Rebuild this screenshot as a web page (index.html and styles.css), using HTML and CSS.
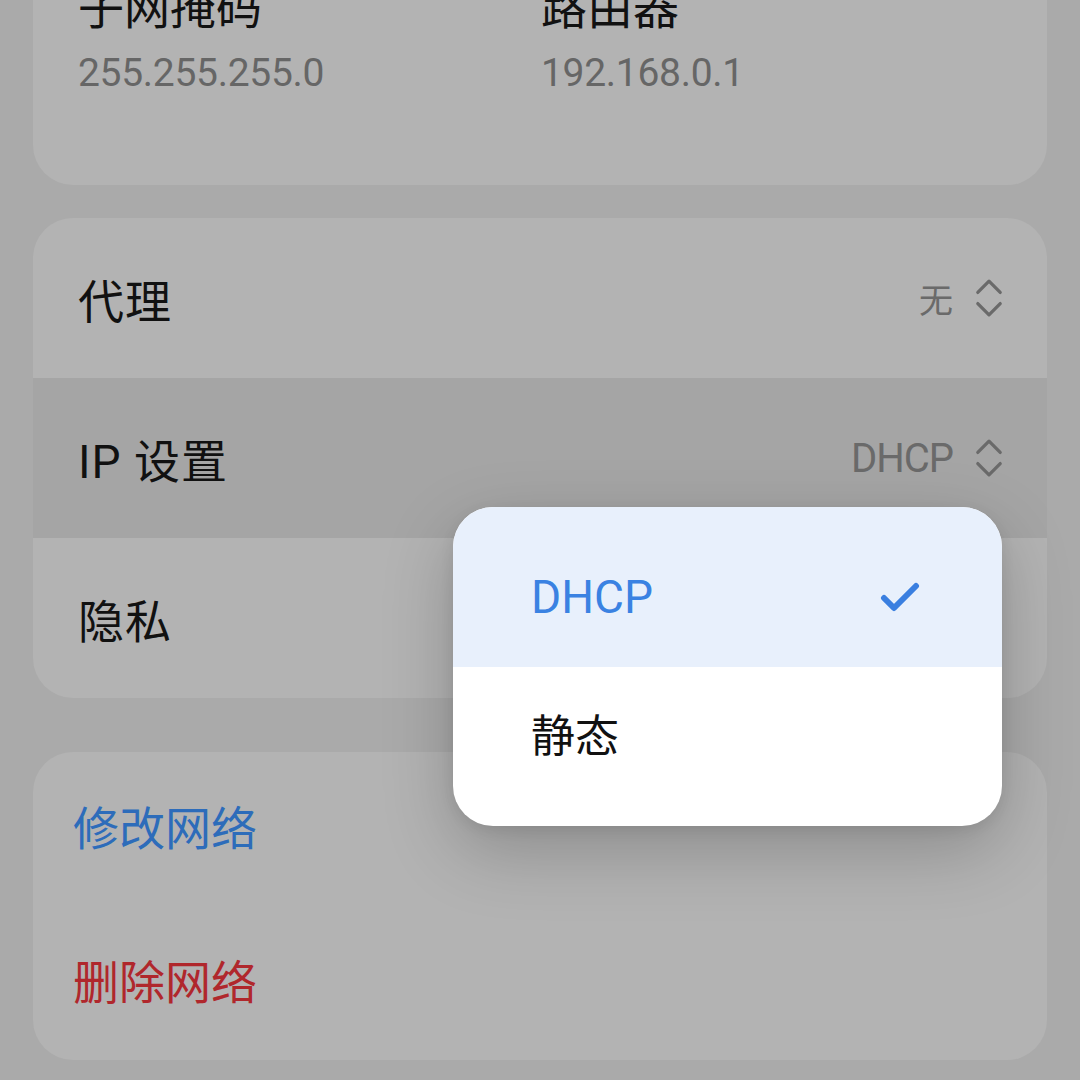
FILE: index.html
```html
<!DOCTYPE html>
<html lang="zh-CN">
<head>
<meta charset="utf-8">
<meta name="viewport" content="width=device-width, initial-scale=1.0">
<title>网络详情</title>
<link rel="stylesheet" href="styles.css">
</head>
<body>
<div class="page">

  <!-- 地址信息 -->
  <div class="card info-card">
    <div class="info-col">
      <div class="info-title">子网掩码</div>
      <div class="info-value">255.255.255.0</div>
    </div>
    <div class="info-col">
      <div class="info-title">路由器</div>
      <div class="info-value">192.168.0.1</div>
    </div>
  </div>

  <!-- 代理 / IP / 隐私 -->
  <div class="card list-card">
    <div class="row">
      <span class="row-label">代理</span>
      <span class="row-value">无
        <svg class="updown" viewBox="0 0 30 44"><path d="M3 16 L15 4 L27 16 M3 28 L15 40 L27 28"/></svg>
      </span>
    </div>
    <div class="row row-active">
      <span class="row-label">IP 设置</span>
      <span class="row-value row-value-latin">DHCP
        <svg class="updown" viewBox="0 0 30 44"><path d="M3 16 L15 4 L27 16 M3 28 L15 40 L27 28"/></svg>
      </span>
    </div>
    <div class="row">
      <span class="row-label">隐私</span>
    </div>

    <!-- 下拉菜单 -->
    <div class="menu">
      <div class="menu-item menu-item-on">
        <span>DHCP</span>
        <svg class="check" viewBox="0 0 40 32"><path d="M4 17 L14 27 L36 5"/></svg>
      </div>
      <div class="menu-item menu-item-last">
        <span>静态</span>
      </div>
    </div>
  </div>

  <!-- 操作 -->
  <div class="card action-card">
    <div class="action action-edit">修改网络</div>
    <div class="action action-delete">删除网络</div>
  </div>

</div>
</body>
</html>
```

FILE: styles.css
```css
html, body {
  margin: 0;
  height: 100%;
  overflow: hidden;
}
body {
  background: #aaaaaa;
  font-family: Roboto, "Noto Sans CJK SC", sans-serif;
  color: #111;
}
.page {
  padding: 0 33px;
  margin-top: -60px;
}
.card {
  background: #b3b3b3;
  border-radius: 40px;
}

/* top card */
.info-card {
  display: grid;
  grid-template-columns: 463px 1fr;
  padding: 40px 45px 0 45px;
  height: 205px;
}
.info-title {
  font-size: 46px;
  line-height: 56px;
}
.info-value {
  font-size: 39px;
  line-height: 50px;
  color: #666;
  margin-top: 12px;
  letter-spacing: -0.3px;
}

/* list card */
.list-card {
  position: relative;
  margin-top: 33px;
}
.row {
  height: 160px;
  display: flex;
  align-items: center;
  justify-content: space-between;
  padding: 0 44px 0 45px;
}
.row-active {
  background: #a5a5a5;
}
.row-label {
  font-size: 46px;
  letter-spacing: 1px;
}
.row-value {
  display: flex;
  align-items: center;
  gap: 22px;
  font-size: 34px;
  color: #6a6a6a;
}
.row-value-latin {
  font-size: 40px;
  letter-spacing: -1px;
}
.updown {
  width: 28px;
  height: 44px;
  fill: none;
  stroke: #6a6a6a;
  stroke-width: 3.5;
  stroke-linecap: round;
  stroke-linejoin: round;
}

/* popup menu */
.menu {
  position: absolute;
  left: 420px;
  top: 289px;
  width: 549px;
  background: #fff;
  border-radius: 40px;
  overflow: hidden;
  box-shadow: 0 24px 70px rgba(0, 0, 0, 0.22), 0 4px 14px rgba(0, 0, 0, 0.08);
}
.menu-item {
  box-sizing: border-box;
  height: 160px;
  display: flex;
  align-items: center;
  justify-content: space-between;
  padding: 0 82px 0 78px;
  font-size: 44px;
  color: #111;
}
.menu-item-on {
  padding-top: 20px;
  background: #e8f0fc;
  color: #3a82e2;
  font-size: 46px;
}
.menu-item-last {
  height: 159px;
  padding-bottom: 28px;
}
.check {
  width: 40px;
  height: 32px;
  fill: none;
  stroke: #3a7fe0;
  stroke-width: 6;
  stroke-linecap: round;
  stroke-linejoin: round;
}

/* bottom card */
.action-card {
  margin-top: 54px;
  height: 308px;
  padding: 0 40px;
  display: flex;
  flex-direction: column;
  justify-content: center;
  gap: 98px;
}
.action {
  font-size: 46px;
  line-height: 56px;
}
.action-edit { color: #2d6cba; }
.action-delete { color: #b0272c; }
```
